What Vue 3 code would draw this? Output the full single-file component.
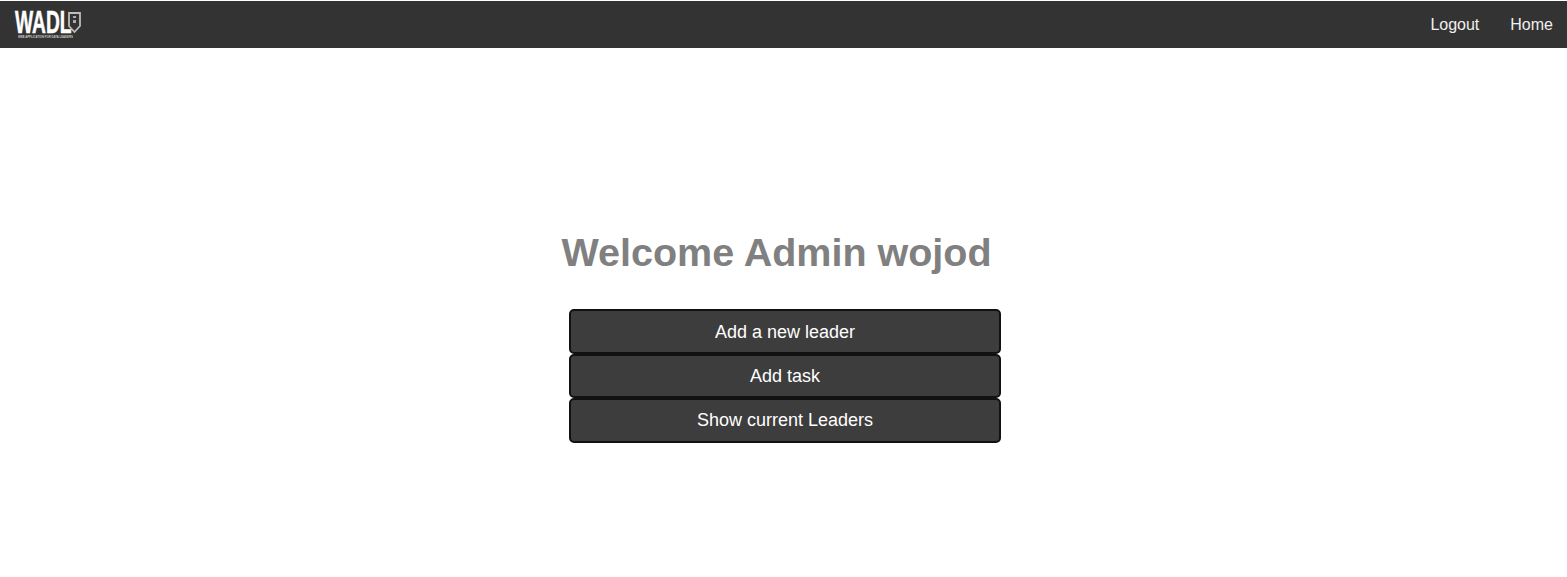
<script setup>
const actions = ['Add a new leader', 'Add task', 'Show current Leaders']
const links = ['Logout', 'Home']
</script>

<template>
  <div class="page">
    <nav class="navbar">
      <a class="logo">
        <div class="logo-text">
          <span class="logo-word">WADL</span>
          <span class="logo-sub">WEB APPLICATION FOR DATA LEADERS</span>
        </div>
        <svg class="logo-shield" width="13" height="22" viewBox="0 0 13 22">
          <path d="M1 1H12V14L6.5 20L1 14Z" fill="none" stroke="#bdbdbd" stroke-width="1.8" />
          <rect x="5" y="4" width="3" height="2" fill="#aaa" />
          <rect x="5" y="8" width="3" height="3" fill="#aaa" />
        </svg>
      </a>
      <div class="nav-links">
        <a v-for="link in links" :key="link" class="nav-link">{{ link }}</a>
      </div>
    </nav>

    <main class="content">
      <h1 class="welcome">Welcome Admin wojod</h1>
      <div class="actions">
        <button v-for="action in actions" :key="action" class="action-btn">{{ action }}</button>
      </div>
    </main>
  </div>
</template>

<style>
html, body {
  margin: 0;
  background: #fff;
}
</style>

<style scoped>
.page {
  font-family: "Liberation Sans", Arial, sans-serif;
}

.navbar {
  height: 47px;
  margin-top: 1px;
  background: #333;
  display: flex;
  align-items: center;
  justify-content: space-between;
  padding: 0 14px 0 15px;
}

.logo {
  display: flex;
  align-items: flex-start;
  height: 28px;
}

.logo-text {
  display: flex;
  flex-direction: column;
  width: 53px;
}

.logo-word {
  font-size: 31px;
  line-height: 24px;
  font-weight: 700;
  color: #fff;
  -webkit-text-stroke: 0.5px #fff;
  transform: scaleX(0.62);
  transform-origin: left center;
  white-space: nowrap;
}

.logo-sub {
  font-size: 4px;
  line-height: 4px;
  font-weight: 700;
  color: #ccc;
  white-space: nowrap;
  transform: scaleX(0.7);
  transform-origin: left center;
  margin-left: 3px;
}

.logo-shield {
  margin-top: 1px;
}

.nav-links {
  display: flex;
  gap: 31px;
}

.nav-link {
  color: #f0f0f0;
  font-size: 16px;
  font-weight: 300;
}

.content {
  display: flex;
  flex-direction: column;
  align-items: center;
  padding-top: 181px;
}

.welcome {
  margin: 0 14px 34px 0;
  font-size: 39.5px;
  line-height: 46px;
  font-weight: 700;
  color: #808080;
}

.actions {
  display: flex;
  flex-direction: column;
  margin-left: 3px;
}

.action-btn {
  width: 432px;
  height: 44px;
  background: #3d3d3d;
  border: 2px solid #111;
  border-radius: 5px;
  color: #fff;
  font-family: inherit;
  font-size: 18px;
  padding: 0;
  cursor: pointer;
}

.action-btn:first-child {
  height: 45px;
  padding-top: 1px;
}

.action-btn:last-child {
  height: 45px;
}
</style>
